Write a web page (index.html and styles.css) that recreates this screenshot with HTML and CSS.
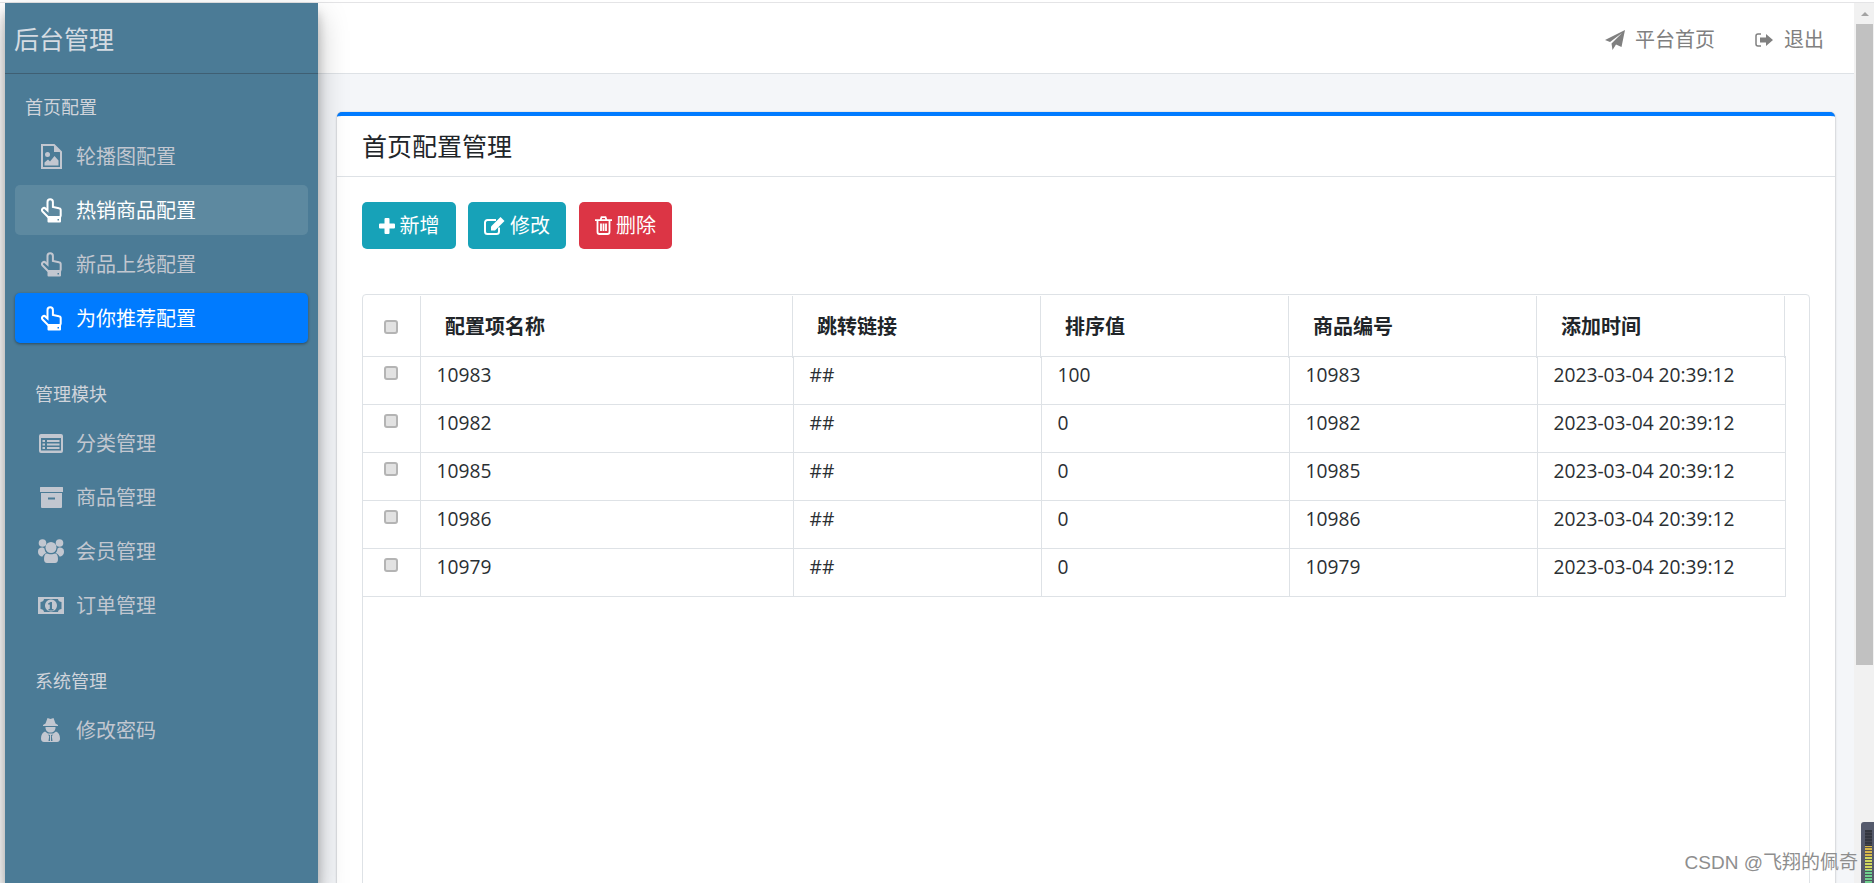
FILE: index.html
```html
<!DOCTYPE html>
<html lang="zh-CN">
<head>
<meta charset="utf-8">
<title>后台管理</title>
<link rel="stylesheet" href="styles.css">
</head>
<body>
<svg class="defs" aria-hidden="true">
  <symbol id="i-hand" viewBox="0 0 21 24">
    <path d="M6.500 12V3.500a2.700 2.700 0 0 1 5.400 0V8.500l6 1.300a2 2 0 0 1 1.800 2V17l-.5 1.500H7L1.600 13a2 2 0 0 1 3-2.800z" fill="none" stroke="currentColor" stroke-width="2"/>
    <path fill-rule="evenodd" d="M6.500 18H20v5a1 1 0 0 1-1 1H7.500a1 1 0 0 1-1-1zM16.500 20.500v1.500h1.500v-1.500z"/>
  </symbol>
  <symbol id="i-image" viewBox="0 0 21 25">
    <path d="M1 1H13L20 8V24H1Z" fill="none" stroke="currentColor" stroke-width="2"/>
    <path d="M13 1V8H20L13 1Z"/>
    <circle cx="6.500" cy="10.500" r="2.500"/>
    <path d="M3.500 21.500V18.500L7 15.500L9 17.500L13.500 12L17.500 16.500V21.500Z"/>
  </symbol>
  <symbol id="i-list" viewBox="0 0 24 19">
    <path fill-rule="evenodd" d="M2 0H22A2 2 0 0 1 24 2V17A2 2 0 0 1 22 19H2A2 2 0 0 1 0 17V2A2 2 0 0 1 2 0ZM2 4V16.500H22V4Z"/>
    <path d="M3.500 6H6V8H3.500ZM8 6H20.500V8H8ZM3.500 9.500H6V11.500H3.500ZM8 9.500H20.500V11.500H8ZM3.500 13H6V15H3.500ZM8 13H20.500V15H8Z"/>
  </symbol>
  <symbol id="i-archive" viewBox="0 0 23 21">
    <path d="M0 .5A.5.5 0 0 1 .5 0H22.500A.5.5 0 0 1 23 .5V5H0Z"/>
    <path fill-rule="evenodd" d="M1 6H22V20A1 1 0 0 1 21 21H2A1 1 0 0 1 1 20ZM8 10.500V12.500H15V10.500Z"/>
  </symbol>
  <symbol id="i-users" viewBox="0 0 26 24">
    <circle cx="13" cy="8.500" r="5.500"/>
    <circle cx="4.500" cy="4" r="3.800"/>
    <circle cx="21.500" cy="4" r="3.800"/>
    <path d="M0 12.500C0 9.500 2 8.500 4 8.500C5 8.500 6 9 6.500 9.500C6.700 11.500 7.500 13 8.500 14C6.500 14.500 5 16 4.500 17.500C2 17.500 0 16 0 12.500Z"/>
    <path d="M26 12.500C26 9.500 24 8.500 22 8.500C21 8.500 20 9 19.500 9.500C19.300 11.500 18.500 13 17.500 14C19.500 14.500 21 16 21.500 17.500C24 17.500 26 16 26 12.500Z"/>
    <path d="M6 20C6 16.500 7 14.500 9 14.500C10.500 15.500 15.500 15.500 17 14.500C19 14.500 20 16.500 20 20C20 22.500 19 24 17 24H9C7 24 6 22.500 6 20Z"/>
  </symbol>
  <symbol id="i-money" viewBox="0 0 26 17">
    <path fill-rule="evenodd" d="M0 0H26V17H0ZM6 2C6 4 4 5 2.500 5V12C4 12 6 13 6 15H20C20 13 22 12 23.500 12V5C22 5 20 4 20 2Z"/>
    <path fill-rule="evenodd" d="M13 2.500A6 6 0 1 1 12.990 2.500ZM12.500 5L10 6.500L10.800 8L11.800 7.300V12H10.500V13.500H15.500V12H14V5Z"/>
  </symbol>
  <symbol id="i-secret" viewBox="0 0 19 24">
    <path d="M6.500 0L9.500 1L12.500 0L14.500 5.500L17 7V8H2V7L4.500 5.500Z"/>
    <path d="M4.500 9H14.500C14.500 13 12.500 14.500 9.500 14.500C6.500 14.500 4.500 13 4.500 9Z"/>
    <path fill-rule="evenodd" d="M4 13.500L6.800 15.500H12.200L15 13.500C17.500 14.500 19 17 19 20.500C19 22.500 18 24 16 24H3C1 24 0 22.500 0 20.500C0 17 1.500 14.500 4 13.500ZM7 16.500L8.200 18.200L7.500 23H9V17ZM12 16.500L10.800 18.200L11.500 23H10V17Z"/>
  </symbol>
  <symbol id="i-plus" viewBox="0 0 16 16">
    <path d="M5.500 1A1 1 0 0 1 6.500 0H9.500A1 1 0 0 1 10.500 1V5.500H15A1 1 0 0 1 16 6.500V9.500A1 1 0 0 1 15 10.500H10.500V15A1 1 0 0 1 9.500 16H6.500A1 1 0 0 1 5.500 15V10.500H1A1 1 0 0 1 0 9.500V6.500A1 1 0 0 1 1 5.500H5.500Z"/>
  </symbol>
  <symbol id="i-edit" viewBox="0 0 21 18">
    <path d="M15 10.500V14.500A2.500 2.500 0 0 1 12.500 17H3.500A2.500 2.500 0 0 1 1 14.500V5.500A2.500 2.500 0 0 1 3.500 3H12" fill="none" stroke="currentColor" stroke-width="2"/>
    <path d="M7 9.500L16.500 0L20.500 4L11 13.500H7Z"/>
  </symbol>
  <symbol id="i-trash" viewBox="0 0 17 19">
    <path d="M5.500 4L6.500 1.200H10.500L11.500 4M0 4.200H17M2.500 4.200V16A2 2 0 0 0 4.500 18H12.500A2 2 0 0 0 14.500 16V4.200M6 7.500V15M8.500 7.500V15M11 7.500V15" fill="none" stroke="currentColor" stroke-width="1.800"/>
  </symbol>
  <symbol id="i-plane" viewBox="0 0 20 20">
    <path d="M20 0L16.500 17L11 14.500L7.500 20L6.500 13.500L17 3L5 12L0 10Z"/>
  </symbol>
  <symbol id="i-signout" viewBox="0 0 18 14">
    <path d="M6 1H3A2 2 0 0 0 1 3V11A2 2 0 0 0 3 13H6" fill="none" stroke="currentColor" stroke-width="1.500"/>
    <path d="M11 1L18 7L11 13V9.500H5V4.500H11Z"/>
  </symbol>
</svg>

<div class="app">
  <aside class="sidebar">
    <div class="brand">后台管理</div>
    <nav class="menu">
      <div class="menu-label menu-label-first">首页配置</div>
      <a class="menu-item"><svg class="mi"><use href="#i-image"/></svg><span>轮播图配置</span></a>
      <a class="menu-item is-hover"><svg class="mi"><use href="#i-hand"/></svg><span>热销商品配置</span></a>
      <a class="menu-item"><svg class="mi"><use href="#i-hand"/></svg><span>新品上线配置</span></a>
      <a class="menu-item is-active"><svg class="mi"><use href="#i-hand"/></svg><span>为你推荐配置</span></a>

      <div class="menu-label">管理模块</div>
      <a class="menu-item"><svg class="mi mi-list"><use href="#i-list"/></svg><span>分类管理</span></a>
      <a class="menu-item"><svg class="mi mi-archive"><use href="#i-archive"/></svg><span>商品管理</span></a>
      <a class="menu-item"><svg class="mi mi-users"><use href="#i-users"/></svg><span>会员管理</span></a>
      <a class="menu-item"><svg class="mi mi-money"><use href="#i-money"/></svg><span>订单管理</span></a>

      <div class="menu-label">系统管理</div>
      <a class="menu-item"><svg class="mi mi-secret"><use href="#i-secret"/></svg><span>修改密码</span></a>
    </nav>
  </aside>

  <main class="main">
    <header class="topbar">
      <a class="top-link"><svg class="ti-plane"><use href="#i-plane"/></svg>平台首页</a>
      <a class="top-link"><svg class="ti-out"><use href="#i-signout"/></svg>退出</a>
    </header>
    <section class="content">
      <div class="card">
        <div class="card-head">首页配置管理</div>
        <div class="card-body">
          <div class="toolbar">
            <button class="btn btn-info btn-add"><svg class="bi-plus"><use href="#i-plus"/></svg>新增</button>
            <button class="btn btn-info btn-edit"><svg class="bi-edit"><use href="#i-edit"/></svg>修改</button>
            <button class="btn btn-danger btn-del"><svg class="bi-trash"><use href="#i-trash"/></svg>删除</button>
          </div>
          <div class="grid-box">
            <div class="grid-head">
              <div class="hc hc-check"><input type="checkbox" class="check"></div>
              <div class="hc">配置项名称</div>
              <div class="hc">跳转链接</div>
              <div class="hc">排序值</div>
              <div class="hc">商品编号</div>
              <div class="hc">添加时间</div>
            </div>
            <div class="grid-body">
              <div class="bc bc-check"><input type="checkbox" class="check"></div><div class="bc">10983</div><div class="bc">##</div><div class="bc">100</div><div class="bc">10983</div><div class="bc">2023-03-04 20:39:12</div>
              <div class="bc bc-check"><input type="checkbox" class="check"></div><div class="bc">10982</div><div class="bc">##</div><div class="bc">0</div><div class="bc">10982</div><div class="bc">2023-03-04 20:39:12</div>
              <div class="bc bc-check"><input type="checkbox" class="check"></div><div class="bc">10985</div><div class="bc">##</div><div class="bc">0</div><div class="bc">10985</div><div class="bc">2023-03-04 20:39:12</div>
              <div class="bc bc-check"><input type="checkbox" class="check"></div><div class="bc">10986</div><div class="bc">##</div><div class="bc">0</div><div class="bc">10986</div><div class="bc">2023-03-04 20:39:12</div>
              <div class="bc bc-check"><input type="checkbox" class="check"></div><div class="bc">10979</div><div class="bc">##</div><div class="bc">0</div><div class="bc">10979</div><div class="bc">2023-03-04 20:39:12</div>
            </div>
          </div>
        </div>
      </div>
    </section>
  </main>

  <div class="scrollbar">
    <div class="scroll-arrow"></div>
    <div class="scroll-thumb"></div>
  </div>
</div>

<div class="watermark">CSDN @飞翔的佩奇</div>
<div class="meter"><div class="meter-bars"></div></div>
</body>
</html>
```
FILE: styles.css
```css
* { box-sizing: border-box; }
html, body { margin: 0; height: 883px; overflow: hidden; background: #fff; }
body {
  font-family: "Open Sans", "Noto Sans CJK SC", sans-serif;
  color: #212529;
  font-size: 19px;
  padding-top: 2px;
  position: relative;
}
.defs { position: absolute; width: 0; height: 0; }

.app {
  display: flex;
  height: 881px;
  border-top: 1px solid #e4e4e6;
  padding-left: 5px;
}

/* sidebar */
.sidebar {
  width: 313px;
  flex: none;
  background: #4b7b96;
  color: #c2c7d0;
  box-shadow: 0 14px 28px rgba(0,0,0,.25), 0 10px 10px rgba(0,0,0,.22);
  position: relative;
  z-index: 2;
}
.brand {
  height: 71px;
  border-bottom: 1px solid #3f5f73;
  padding-left: 9px;
  font-size: 25px;
  line-height: 72px;
  color: #d5dbe2;
}
.menu { padding: 15px 10px 0; }
.menu-label {
  height: 36px;
  line-height: 36px;
  font-size: 18px;
  padding-left: 20px;
  margin-top: 33px;
  margin-bottom: 6px;
  color: #d0d4db;
}
.menu-label-first { margin-top: 0; padding-left: 10px; }
.menu-item {
  display: flex;
  align-items: center;
  height: 50px;
  margin-bottom: 4px;
  padding-left: 26px;
  border-radius: 5px;
  font-size: 20px;
  line-height: 30px;
}
.menu-item span { margin-left: 14px; padding-top: 2px; }
.mi { width: 21px; height: 25px; flex: none; fill: currentColor; }
.mi-list { width: 24px; height: 19px; margin-left: -2px; margin-right: -1px; }
.mi-archive { width: 23px; height: 21px; margin-left: -1px; margin-right: -1px; }
.mi-users { width: 26px; height: 24px; margin-left: -3px; margin-right: -2px; }
.mi-money { width: 26px; height: 17px; margin-left: -3px; margin-right: -2px; }
.mi-secret { width: 19px; height: 24px; margin-right: 2px; }
.is-hover { background: #5d89a0; color: #fff; }
.is-active { background: #007bff; color: #fff; box-shadow: 0 1px 3px rgba(0,0,0,.4); }

/* main */
.main { flex: 1; min-width: 0; display: flex; flex-direction: column; }
.topbar {
  height: 71px;
  flex: none;
  background: #fff;
  border-bottom: 1px solid #dee2e6;
  display: flex;
  justify-content: flex-end;
  align-items: center;
  padding: 3px 30px 0 0;
  gap: 40px;
}
.top-link {
  display: flex;
  align-items: center;
  font-size: 20px;
  line-height: 30px;
  color: #808080;
}
.ti-plane { width: 20px; height: 20px; margin-right: 10px; fill: currentColor; }
.ti-out { width: 18px; height: 14px; margin-right: 11px; fill: currentColor; }

.content {
  flex: 1;
  min-height: 0;
  background: #f4f6f9;
  padding: 38px 19px 0;
  overflow: hidden;
}
.card {
  height: 900px;
  background: #fff;
  border-top: 4px solid #007bff;
  border-radius: 5px;
  box-shadow: 0 0 1px rgba(0,0,0,.3), 0 1px 3px rgba(0,0,0,.2);
}
.card-head {
  height: 61px;
  border-bottom: 1px solid #dee2e6;
  padding-left: 25px;
  font-size: 25px;
  line-height: 60px;
  color: #212529;
}
.card-body { padding: 25px 25px 0; }

.toolbar { display: flex; height: 47px; }
.btn {
  height: 47px;
  border: 0;
  border-radius: 5px;
  color: #fff;
  font: inherit;
  font-size: 20px;
  line-height: 47px;
  display: flex;
  align-items: center;
  padding: 0;
  justify-content: center;
}
.btn-info { background: #17a2b8; }
.btn-danger { background: #dc3545; }
.btn-add { width: 94px; margin-right: 12px; }
.btn-edit { width: 98px; margin-right: 13px; }
.btn-del { width: 93px; }
.bi-plus { width: 16px; height: 16px; margin-right: 5px; fill: currentColor; }
.bi-edit { width: 21px; height: 18px; margin-right: 5px; fill: currentColor; }
.bi-trash { width: 17px; height: 19px; margin-right: 4px; fill: currentColor; }

.grid-box {
  margin-top: 45px;
  height: 700px;
  border: 1px solid #dee2e6;
  border-radius: 4px;
}
.grid-head {
  display: grid;
  grid-template-columns: 58px 372px 248px 248px 248px 248px;
  height: 61px;
  padding-top: 1px;
}
.hc {
  border-right: 1px solid #dee2e6;
  font-weight: 700;
  font-size: 20px;
  line-height: 62px;
  padding-left: 24px;
}
.hc-check { padding: 24px 2px 0 0; display: flex; justify-content: center; }
.grid-body {
  display: grid;
  grid-template-columns: 58px 373px 248px 248px 248px 248px;
  grid-auto-rows: 48px;
  width: 1423px;
  border-top: 1px solid #dee2e6;
}
.bc {
  border-right: 1px solid #dee2e6;
  border-bottom: 1px solid #dee2e6;
  padding: 3px 0 0 15.5px;
  line-height: 29px;
  font-size: 19.2px;
  color: #2b2f33;
}
.bc-check { padding: 9px 2px 0 0; display: flex; justify-content: center; align-items: flex-start; }
.check {
  appearance: none;
  -webkit-appearance: none;
  width: 14px;
  height: 14px;
  margin: 0;
  border: 2px solid #b4b4b4;
  border-radius: 3px;
  background: #e2e2e2;
}

/* fake window scrollbar */
.scrollbar {
  width: 20px;
  flex: none;
  background: #f1f1f1;
  padding: 9px 1px 0 2px;
}
.scroll-arrow {
  width: 0;
  height: 0;
  margin: 0 auto 8px;
  border-left: 4.5px solid transparent;
  border-right: 4.5px solid transparent;
  border-bottom: 4.5px solid #a3a3a3;
}
.scroll-thumb { height: 641px; background: #c1c1c1; }

/* overlays */
.watermark {
  position: absolute;
  right: 16px;
  bottom: 8px;
  font-family: "Liberation Sans", "Noto Sans CJK SC", sans-serif;
  font-size: 19px;
  line-height: 24px;
  color: #8e8e8e;
  z-index: 5;
}
.meter {
  position: absolute;
  right: 0;
  bottom: 0;
  width: 13px;
  height: 61px;
  background: #555a6c;
  border-radius: 3px 0 0 0;
  padding: 8px 0 0 4px;
  z-index: 4;
}
.meter-bars {
  width: 7px;
  height: 53px;
  background:
    repeating-linear-gradient(to bottom, transparent 0 2px, rgba(70,70,80,.85) 2px 3px),
    linear-gradient(to bottom, #33363f 0 30%, #d6b64b 30% 50%, #cfd75f 50% 75%, #6fcf8f 75% 100%);
}
```
